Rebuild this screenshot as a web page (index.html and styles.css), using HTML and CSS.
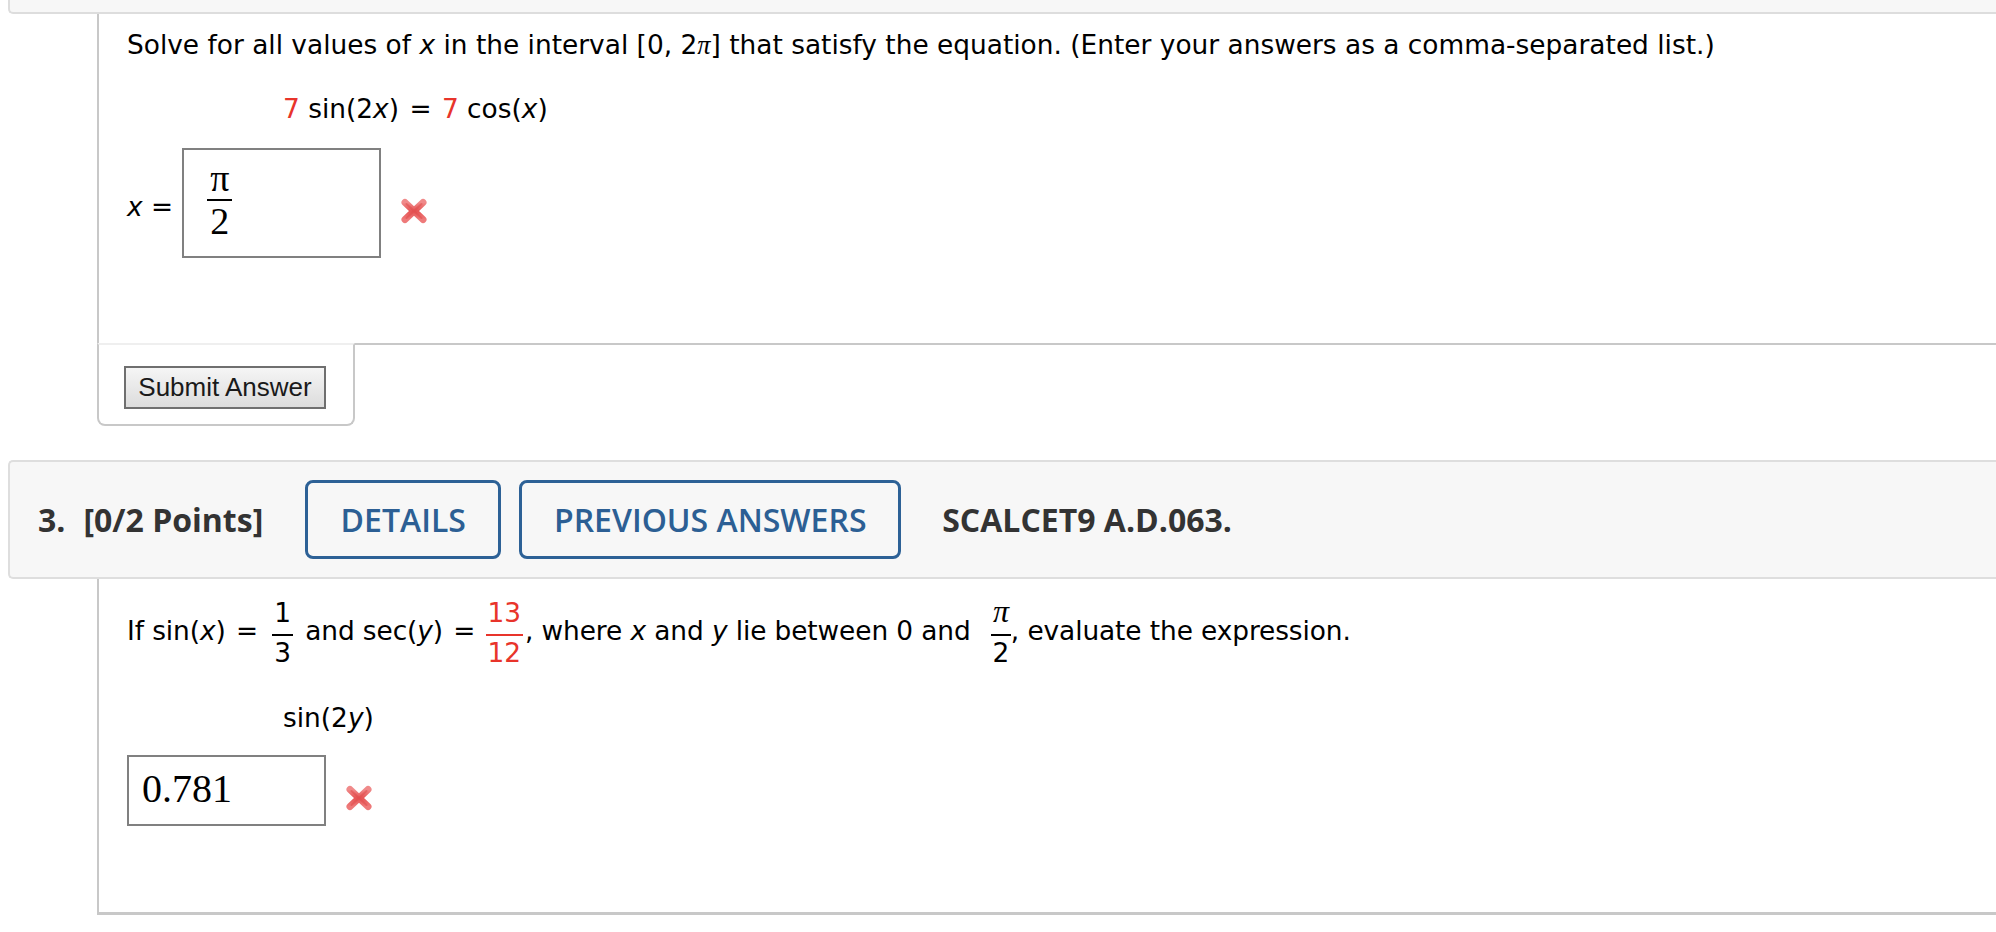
FILE: index.html
```html
<!DOCTYPE html>
<html>
<head>
<meta charset="utf-8">
<link rel="stylesheet" href="styles.css">
</head>
<body>
<div class="page">
  <div class="prev-head"></div>

  <div class="q-body q2">
    <div class="q2-content">
      <p class="prompt">Solve for all values of <i>x</i> in the interval [0, 2<i class="pi">π</i>] that satisfy the equation. (Enter your answers as a comma-separated list.)</p>
      <p class="eq"><span class="red">7</span> sin(2<i>x</i>) <span class="eqs">=</span> <span class="red">7</span> cos(<i>x</i>)</p>
      <div class="answer-row">
        <span class="var"><i>x</i> =</span>
        <div class="ans-box big">
          <span class="sfrac"><span class="snum">π</span><span class="sden">2</span></span>
        </div>
        <svg class="xmark xm1" viewBox="0 0 28 26" width="28" height="26">
          <defs>
            <linearGradient id="xg" x1="0" y1="0" x2="0" y2="1">
              <stop offset="0" stop-color="#f08a8a"/>
              <stop offset="0.5" stop-color="#e65454"/>
              <stop offset="1" stop-color="#ee7a7a"/>
            </linearGradient>
          </defs>
          <path d="M5 4.5 L23 21.5 M23 4.5 L5 21.5" stroke="url(#xg)" stroke-width="7" stroke-linecap="round" fill="none"/>
          <path d="M6.5 6 L21.5 20 M21.5 6 L6.5 20" stroke="#e04a4a" stroke-width="2" stroke-linecap="round" fill="none" opacity="0.5"/>
        </svg>
      </div>
    </div>
    <div class="submit-row">
      <div class="submit-tab"><button class="submit">Submit Answer</button></div>
      <div class="submit-rest"></div>
    </div>
  </div>

  <div class="q-head">
    <span class="q-num">3.</span>
    <span class="q-points">[0/2 Points]</span>
    <span class="q-btn btn-details">DETAILS</span>
    <span class="q-btn btn-prev">PREVIOUS ANSWERS</span>
    <span class="q-code">SCALCET9 A.D.063.</span>
  </div>

  <div class="q-body q3">
    <p class="prompt2">If sin(<i>x</i>) <span class="eqs">=</span> <span class="frac"><span class="num">1</span><span class="den">3</span></span> and sec(<i>y</i>) <span class="eqs">=</span> <span class="frac frac-tight red"><span class="num">13</span><span class="den">12</span></span>, where <i>x</i> and <i>y</i> lie between 0 and <span class="frac frac-pi"><span class="num"><i class="pi">π</i></span><span class="den">2</span></span>, evaluate the expression.</p>
    <p class="eq eq2">sin(2<i>y</i>)</p>
    <div class="answer-row2">
      <div class="ans-box small">0.781</div>
      <svg class="xmark xm2" viewBox="0 0 28 26" width="28" height="26">
        <path d="M5 4.5 L23 21.5 M23 4.5 L5 21.5" stroke="url(#xg)" stroke-width="7" stroke-linecap="round" fill="none"/>
        <path d="M6.5 6 L21.5 20 M21.5 6 L6.5 20" stroke="#e04a4a" stroke-width="2" stroke-linecap="round" fill="none" opacity="0.5"/>
      </svg>
    </div>
  </div>
</div>
</body>
</html>
```

FILE: styles.css
```css
html, body {
  margin: 0;
  padding: 0;
  background: #ffffff;
  overflow: hidden;
}

.page {
  width: 2030px;
  font-family: "DejaVu Sans", Verdana, sans-serif;
  font-size: 26.4px;
  color: #000;
}

p { margin: 0; }

.red { color: #e8342b; }

.eqs { margin: 0 2px; }

.pi {
  font-family: "Liberation Serif", serif;
  font-style: italic;
}

.prev-head {
  margin-left: 8px;
  height: 12px;
  background: #f7f7f7;
  border-left: 2px solid #dddddd;
  border-bottom: 2px solid #dddddd;
  border-bottom-left-radius: 5px;
}

.q-body {
  margin-left: 97px;
}

.q2-content {
  border-left: 2px solid #c8c8c8;
  padding: 15px 0 85px 28px;
}

.prompt {
  line-height: 31px;
  height: 31px;
  white-space: nowrap;
}

.eq {
  line-height: 31px;
  margin-top: 33px;
  padding-left: 156px;
}

.answer-row {
  display: flex;
  align-items: flex-start;
  margin-top: 24px;
}

.var {
  line-height: 31px;
  margin-top: 43px;
  margin-right: 9px;
  white-space: nowrap;
}

.ans-box {
  box-sizing: border-box;
  border: 2px solid #808080;
  background: #fff;
  font-family: "Liberation Serif", "Times New Roman", serif;
  color: #000;
}

.ans-box.big {
  width: 199px;
  height: 110px;
  padding: 9px 0 0 23px;
}

.sfrac {
  display: inline-flex;
  flex-direction: column;
  align-items: center;
  font-size: 38px;
}

.snum {
  line-height: 38px;
  padding: 0 3px 2px;
}

.sden {
  line-height: 38px;
  border-top: 2px solid #000;
  padding: 1px 3px 0;
  align-self: stretch;
  text-align: center;
}

.xmark { display: block; flex: none; }

.xm1 {
  margin-left: 19px;
  margin-top: 50px;
}

.submit-row {
  display: flex;
  align-items: flex-start;
}

.submit-tab {
  box-sizing: border-box;
  width: 258px;
  border: 2px solid #c8c8c8;
  border-top-color: #efefef;
  border-radius: 0 0 8px 8px;
  padding: 21px 0 15px 25px;
}

.submit-rest {
  flex: 1;
  border-top: 2px solid #c8c8c8;
}

.submit {
  display: block;
  box-sizing: border-box;
  width: 202px;
  height: 43px;
  margin: 0;
  padding: 0;
  border: 2px solid #6f6f6f;
  border-radius: 0;
  background: linear-gradient(#f5f5f5, #dcdcdc);
  font-family: "Liberation Sans", Arial, sans-serif;
  font-size: 26px;
  color: #1a1a1a;
}

.q-head {
  box-sizing: border-box;
  margin-top: 34px;
  margin-left: 8px;
  height: 119px;
  background: #f7f7f7;
  border: 2px solid #dedede;
  border-right: none;
  border-radius: 5px 0 0 5px;
  display: flex;
  align-items: center;
  padding-left: 28px;
  font-family: "Open Sans", sans-serif;
  font-weight: 700;
  font-size: 32px;
  color: #333333;
}

.q-points { margin-left: 18px; }

.q-btn {
  box-sizing: border-box;
  height: 79px;
  border: 3px solid #2d6196;
  border-radius: 8px;
  display: flex;
  align-items: center;
  justify-content: center;
  color: #2c5f94;
  font-weight: 600;
}

.btn-details {
  width: 196px;
  margin-left: 42px;
}

.btn-prev {
  width: 382px;
  margin-left: 18px;
}

.q-code { margin-left: 41px; }

.q3 {
  border-left: 2px solid #c8c8c8;
  border-bottom: 3px solid #c8c8c8;
  padding: 19px 0 86px 28px;
}

.prompt2 {
  line-height: 31px;
  white-space: nowrap;
  letter-spacing: -0.1px;
}

.frac {
  display: inline-flex;
  flex-direction: column;
  align-items: stretch;
  vertical-align: 18px;
  text-align: center;
  margin: 0 4px;
}

.frac.frac-tight { margin: 0 2px 0 0; }

.frac.frac-pi { margin: 0 0 0 12px; }

.frac .num {
  line-height: 26px;
  padding: 0 2px 8px;
}

.frac .den {
  line-height: 26px;
  border-top: 2px solid currentColor;
  padding-top: 4px;
}

.frac .num .pi {
  font-size: 32px;
  line-height: 26px;
}

.frac:not(.red) .den { border-top-color: #000; }

.eq2 {
  margin-top: 36px;
}

.answer-row2 {
  display: flex;
  align-items: flex-start;
  margin-top: 22px;
}

.ans-box.small {
  width: 199px;
  height: 71px;
  font-size: 40px;
  line-height: 40px;
  padding: 12px 0 0 13px;
}

.xm2 {
  margin-left: 19px;
  margin-top: 30px;
}
```
